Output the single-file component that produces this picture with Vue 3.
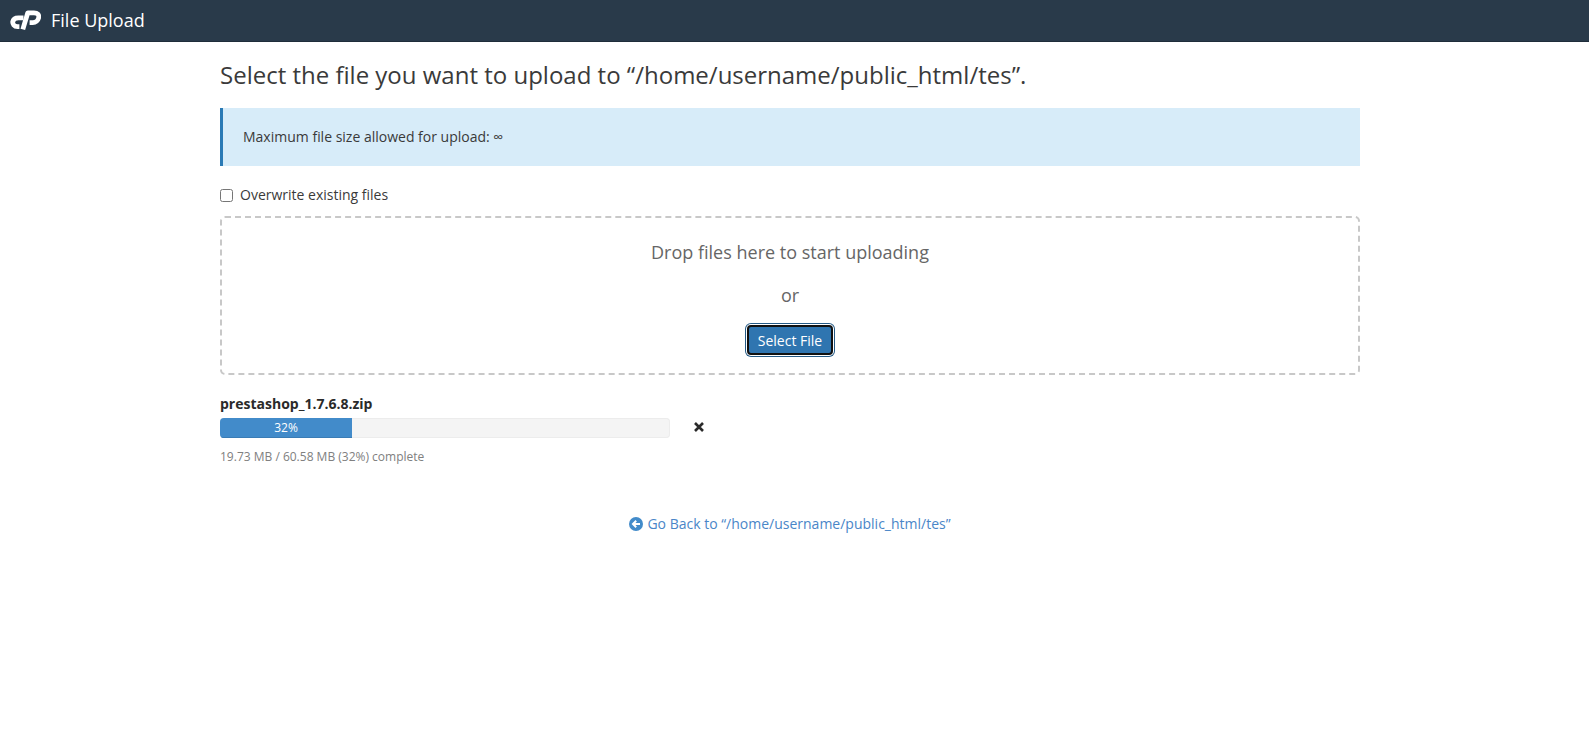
<script setup>
const barWidth = 132
</script>

<template>
  <header class="topbar">
    <svg class="logo" viewBox="0 0 31 21" aria-hidden="true">
      <path class="logo-c" d="M13.500 7.800H8.400C5.400 7.800 3.200 9.300 2.800 11.500 2.400 14 4 16.700 7.600 16.700H9.400" />
      <path class="logo-c" d="M12.800 19.400 17.800 2.800H24C27.600 2.800 29.200 5 28.700 7.600 28.200 10.400 25.500 12.600 22.800 12.600H19.600" />
    </svg>
    <span class="title">File Upload</span>
  </header>

  <main class="page">
    <h1 class="heading">Select the file you want to upload to “/home/username/public_html/tes”.</h1>

    <div class="alert">Maximum file size allowed for upload: ∞</div>

    <label class="overwrite">
      <input type="checkbox" class="check" />
      <span>Overwrite existing files</span>
    </label>

    <section class="dropzone">
      <div class="drop-text">Drop files here to start uploading</div>
      <div class="drop-or">or</div>
      <button type="button" class="select-btn">Select File</button>
    </section>

    <section class="upload">
      <div class="filename">prestashop_1.7.6.8.zip</div>
      <div class="progress-row">
        <div class="progress">
          <div class="bar" :style="{ width: barWidth + 'px' }">32%</div>
        </div>
        <svg class="close" viewBox="0 0 12 12" aria-hidden="true">
          <path d="M2 2l8 8M10 2l-8 8" />
        </svg>
      </div>
      <div class="status">19.73 MB / 60.58 MB (32%) complete</div>
    </section>

    <div class="back">
      <a class="back-link" href="#">
        <svg class="back-icon" viewBox="0 0 14 14" aria-hidden="true">
          <circle cx="7" cy="7" r="7" fill="#428bca" />
          <path d="M11 7H4.500M7.200 3.800 4 7l3.200 3.200" fill="none" stroke="#fff" stroke-width="2" />
        </svg>
        <span>Go Back to “/home/username/public_html/tes”</span>
      </a>
    </div>
  </main>
</template>

<style>
html, body { background: #fff; }
</style>

<style scoped>
.topbar {
  height: 41px;
  background: #293a4a;
  border-bottom: 1px solid #1f2d3a;
  box-sizing: content-box;
  display: flex;
  align-items: center;
  padding-left: 10px;
  color: #fff;
  font-family: "Open Sans", sans-serif;
}
.logo { width: 31px; height: 21px; margin-right: 10px; }
.logo-c { fill: none; stroke: #fff; stroke-width: 4.800; stroke-linejoin: round; }
.title { font-size: 18px; line-height: 41px; }
.page {
  width: 1140px;
  margin-left: 220px;
  font-family: "Open Sans", sans-serif;
  font-size: 14px;
  color: #3a3a3a;
}
.heading {
  margin: 16px 0 0;
  font-size: 24px;
  line-height: 33px;
  font-weight: 400;
}
.alert {
  margin-top: 17px;
  height: 58px;
  line-height: 58px;
  box-sizing: border-box;
  padding-left: 20px;
  background: #d7ecf9;
  border-left: 3px solid #2a7ab5;
  font-size: 14px;
}
.overwrite {
  display: flex;
  align-items: center;
  margin-top: 18px;
  height: 20px;
}
.check { width: 13px; height: 13px; margin: 3px 7px 0 0; }
.dropzone {
  margin-top: 12px;
  height: 159px;
  box-sizing: border-box;
  border: 2px dashed #c8c8c8;
  border-radius: 5px;
  text-align: center;
  color: #666;
  font-size: 18px;
}
.drop-text { margin-top: 22px; line-height: 25px; }
.drop-or { margin-top: 18px; line-height: 25px; }
.select-btn {
  display: block;
  margin: 17px auto 0;
  width: 86px;
  height: 30px;
  box-sizing: border-box;
  background: #2f75b0;
  color: #fff;
  border: 2px solid #111;
  border-radius: 4px;
  box-shadow: 0 0 0 1px #fff, 0 0 0 2px #245a86;
  font-family: "Open Sans", sans-serif;
  font-size: 14px;
  padding: 0;
}
.upload { margin-top: 19px; }
.filename { font-weight: 700; line-height: 20px; color: #2a2a2a; }
.progress-row { display: flex; align-items: center; margin-top: 4px; }
.progress {
  width: 450px;
  height: 20px;
  background: #f4f4f4;
  border-radius: 4px;
  box-shadow: inset 0 0 0 1px #ececec;
  overflow: hidden;
}
.bar {
  height: 20px;
  background: #428bca;
  border-bottom: 1px solid #3a7cb5;
  box-sizing: border-box;
  color: #fff;
  font-size: 12px;
  line-height: 20px;
  text-align: center;
}
.close {
  width: 12px;
  height: 12px;
  margin: -2px 0 0 23px;
  fill: none;
  stroke: #2a2a2a;
  stroke-width: 2.600;
}
.status { margin-top: 10px; font-size: 12px; line-height: 17px; color: #808080; }
.back { margin-top: 49px; text-align: center; }
.back-link {
  display: inline-flex;
  align-items: center;
  gap: 4px;
  color: #4a86c8;
  text-decoration: none;
  line-height: 20px;
}
.back-icon { width: 14px; height: 14px; }
</style>
